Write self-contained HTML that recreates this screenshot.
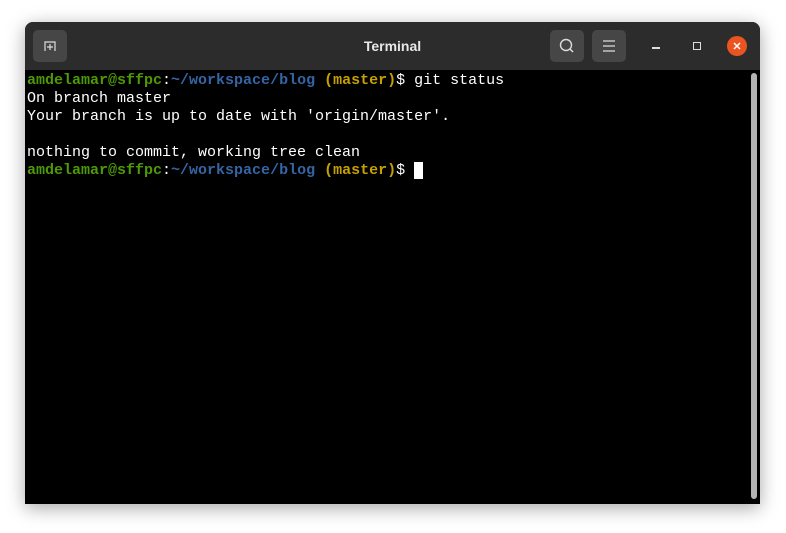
<!DOCTYPE html>
<html><head><style>
body{margin:0;width:786px;height:533px;background:#fff;position:relative;overflow:hidden;font-family:"Liberation Sans",sans-serif}
.win{position:absolute;left:25px;top:22px;width:735px;height:482px;background:#000;border-radius:8px 8px 0 0;box-shadow:0 4px 18px rgba(0,0,0,.35);overflow:hidden}
.tb{position:absolute;left:0;top:0;width:735px;height:48px;background:#2c2c2c}
.btn{position:absolute;top:8px;width:34px;height:32px;background:#464646;border-radius:5px}
.title{position:absolute;left:0;width:735px;top:16px;text-align:center;color:#e8e8e8;font-weight:bold;font-size:14px}
pre{position:absolute;left:2px;top:50px;margin:0;font-family:"Liberation Mono",monospace;font-size:15px;line-height:18px;color:#fff}
.g{color:#4e9a06;font-weight:bold}.b{color:#3465a4;font-weight:bold}.y{color:#c4a000;font-weight:bold}
.sb{position:absolute;left:726px;top:51px;width:6px;height:426px;background:#b3b3b3;border-radius:3px}
</style></head><body>
<div class="win">
<div class="tb">
<div class="btn" style="left:8px"><svg width="34" height="32"><path d="M12 21V12h10v9M17 14v6M14 17h6" stroke="#ddd" stroke-width="1.2" fill="none"/></svg></div>
<div class="title">Terminal</div>
<div class="btn" style="left:525px"><svg width="34" height="32"><circle cx="16" cy="15" r="5.5" stroke="#ddd" stroke-width="1.4" fill="none"/><path d="M20 19l3 3" stroke="#ddd" stroke-width="1.5"/></svg></div>
<div class="btn" style="left:567px"><svg width="34" height="32"><path d="M11 11h12M11 16h12M11 21h12" stroke="#ddd" stroke-width="1.2"/></svg></div>
<div style="position:absolute;left:627px;top:25px;width:8px;height:1.5px;background:#ddd"></div>
<div style="position:absolute;left:668px;top:20px;width:6px;height:6px;border:1.3px solid #ddd"></div>
<div style="position:absolute;left:702px;top:14px;width:20px;height:20px;border-radius:50%;background:#e95420"><svg width="20" height="20"><path d="M7 7l6 6M13 7l-6 6" stroke="#fff" stroke-width="1.5"/></svg></div>
</div>
<pre><span class="g">amdelamar@sffpc</span>:<span class="b">~/workspace/blog</span> <span class="y">(master)</span>$ git status
On branch master
Your branch is up to date with 'origin/master'.

nothing to commit, working tree clean
<span class="g">amdelamar@sffpc</span>:<span class="b">~/workspace/blog</span> <span class="y">(master)</span>$ <span style="background:#fff"> </span></pre>
<div class="sb"></div>
</div>
</body></html>
